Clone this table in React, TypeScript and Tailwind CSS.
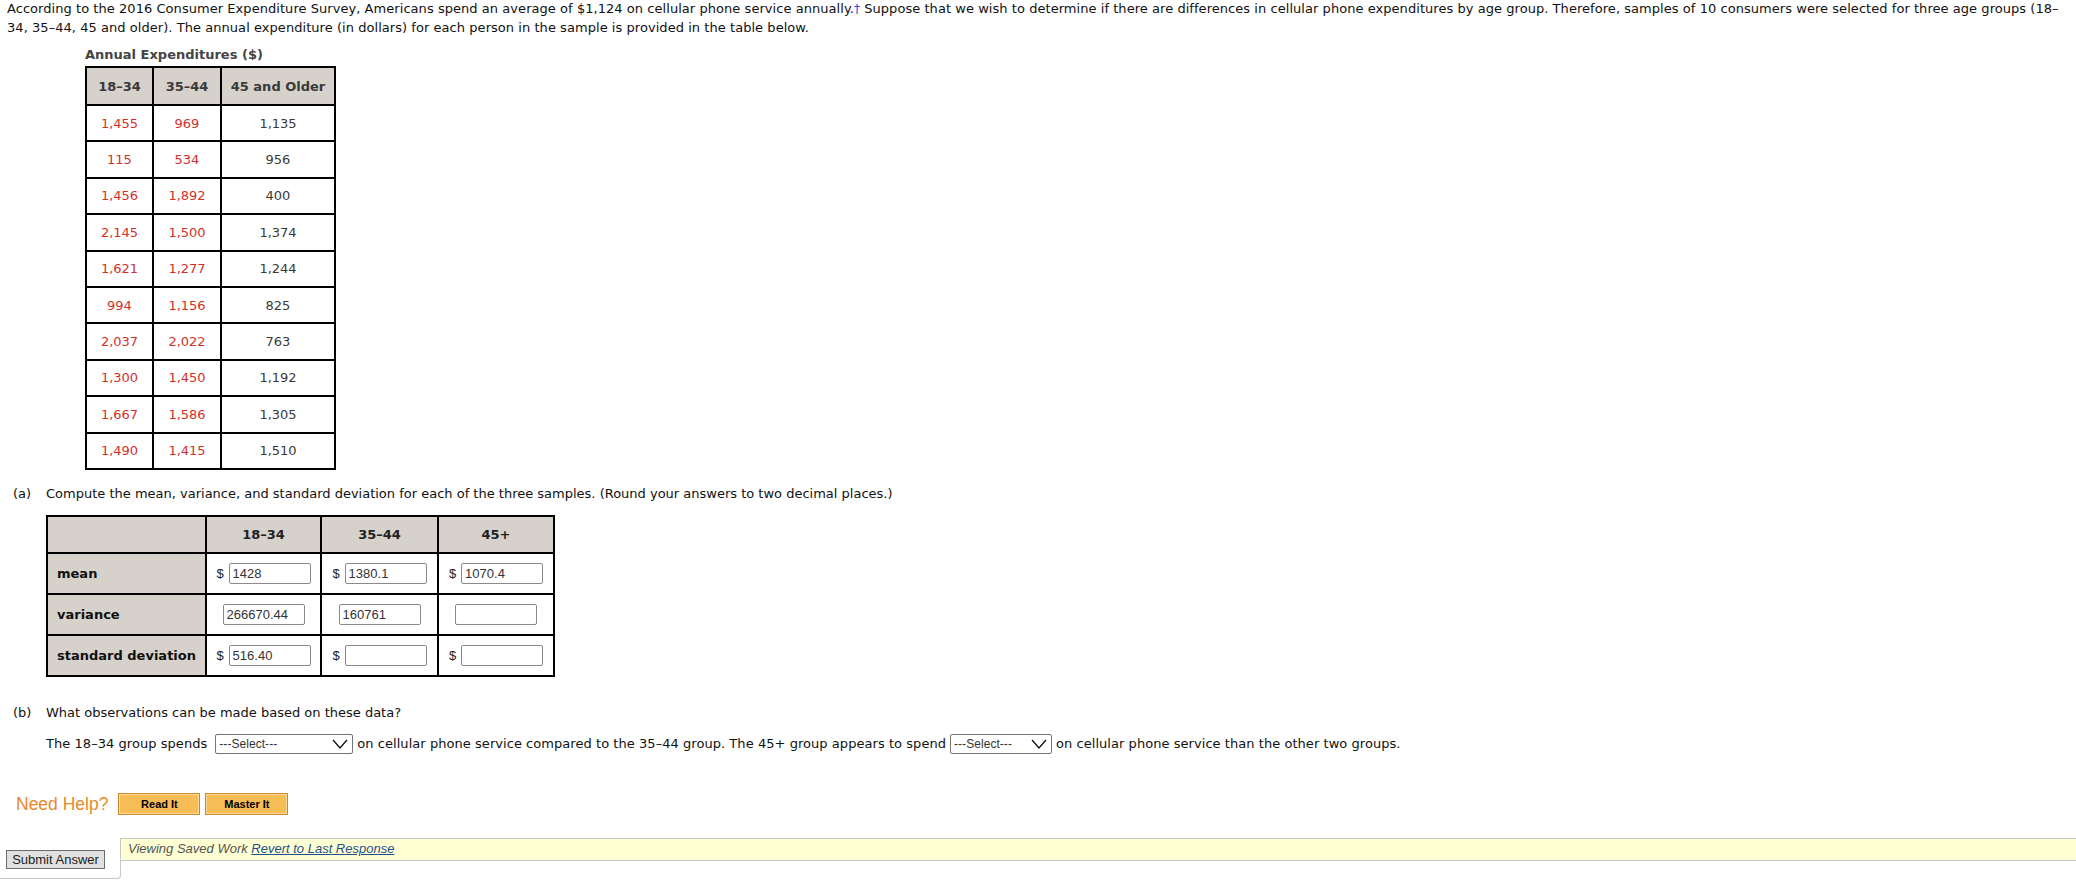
import React from 'react';

const DATA: string[][] = [
  ['1,455', '969', '1,135'],
  ['115', '534', '956'],
  ['1,456', '1,892', '400'],
  ['2,145', '1,500', '1,374'],
  ['1,621', '1,277', '1,244'],
  ['994', '1,156', '825'],
  ['2,037', '2,022', '763'],
  ['1,300', '1,450', '1,192'],
  ['1,667', '1,586', '1,305'],
  ['1,490', '1,415', '1,510'],
];

type Cell = { dollar: boolean; value: string };

const STATS: { label: string; cells: Cell[] }[] = [
  {
    label: 'mean',
    cells: [
      { dollar: true, value: '1428' },
      { dollar: true, value: '1380.1' },
      { dollar: true, value: '1070.4' },
    ],
  },
  {
    label: 'variance',
    cells: [
      { dollar: false, value: '266670.44' },
      { dollar: false, value: '160761' },
      { dollar: false, value: '' },
    ],
  },
  {
    label: 'standard deviation',
    cells: [
      { dollar: true, value: '516.40' },
      { dollar: true, value: '' },
      { dollar: true, value: '' },
    ],
  },
];

const AnswerBox: React.FC<{ value: string }> = ({ value }) => (
  <input
    readOnly
    value={value}
    className="w-[82px] h-[21px] px-[3px] border border-[#8a8a8a] rounded-[2px] bg-white text-[13px] text-[#333] font-['Liberation_Sans',Arial,sans-serif] outline-none"
  />
);

const FakeSelect: React.FC<{ width: string }> = ({ width }) => (
  <span
    className={`inline-flex items-center justify-between align-middle h-[20px] pl-[3px] pr-[4px] border border-[#767676] rounded-[2px] bg-white text-[12px] text-[#333] font-['Liberation_Sans',Arial,sans-serif] ${width}`}
  >
    <span>---Select---</span>
    <svg width="16" height="10" viewBox="0 0 16 10" className="shrink-0">
      <polyline points="1,1 8,9 15,1" fill="none" stroke="#111" strokeWidth="1.3" />
    </svg>
  </span>
);

const App: React.FC = () => {
  return (
    <div className="min-h-screen bg-white font-['DejaVu_Sans',Verdana,sans-serif] text-[13px] text-[#111]">
      {/* INTRO */}
      <p className="pl-[7px] pr-[16px] leading-[19px] tracking-[0.05px] -mt-[1px]">
        According to the 2016 Consumer Expenditure Survey, Americans spend an average of $1,124 on cellular phone
        service annually.<span className="text-[#2b4fd8] text-[12px] leading-none">†</span> Suppose that we wish to
        determine if there are differences in cellular phone expenditures by age group. Therefore, samples of 10
        consumers were selected for three age groups (18–34, 35–44, 45 and older). The annual expenditure (in dollars)
        for each person in the sample is provided in the table below.
      </p>

      {/* DATA TABLE */}
      <div className="ml-[85px] mt-[9px]">
        <div className="font-bold text-[#444] leading-[18px] mb-[2px]">Annual Expenditures ($)</div>
        <table className="border-separate border-spacing-0 border border-black">
          <thead>
            <tr className="bg-[#d6d2cb] text-[#3a3a3a]">
              <th className="w-[67px] border border-black py-[8.5px] leading-[19px] font-bold">18–34</th>
              <th className="w-[68px] border border-black py-[8.5px] leading-[19px] font-bold">35–44</th>
              <th className="w-[114px] border border-black py-[8.5px] leading-[19px] font-bold">45 and Older</th>
            </tr>
          </thead>
          <tbody>
            {DATA.map((row) => (
              <tr key={row.join('-')}>
                <td className="border border-black pt-[8.5px] pb-[7.5px] leading-[18.4px] text-center text-[#d3302b]">{row[0]}</td>
                <td className="border border-black pt-[8.5px] pb-[7.5px] leading-[18.4px] text-center text-[#d3302b]">{row[1]}</td>
                <td className="border border-black pt-[8.5px] pb-[7.5px] leading-[18.4px] text-center text-[#3a3a3a]">{row[2]}</td>
              </tr>
            ))}
          </tbody>
        </table>
      </div>

      {/* PART A */}
      <div className="flex mt-[14px] leading-[19px]">
        <span className="pl-[13px] w-[46px]">(a)</span>
        <span>Compute the mean, variance, and standard deviation for each of the three samples. (Round your answers to two decimal places.)</span>
      </div>

      <div className="ml-[46px] mt-[12px]">
        <table className="border-separate border-spacing-0 border border-black">
          <thead>
            <tr className="bg-[#d6d2cb] text-[#222]">
              <th className="w-[159px] border border-black py-[8px] leading-[19px]"></th>
              <th className="w-[115px] border border-black py-[8px] leading-[19px] font-bold">18–34</th>
              <th className="w-[117px] border border-black py-[8px] leading-[19px] font-bold">35–44</th>
              <th className="w-[116px] border border-black py-[8px] leading-[19px] font-bold">45+</th>
            </tr>
          </thead>
          <tbody>
            {STATS.map((row) => (
              <tr key={row.label}>
                <td className="bg-[#d6d2cb] border border-black h-[41px] pl-[9px] font-bold text-[#111] whitespace-nowrap">
                  {row.label}
                </td>
                {row.cells.map((c, i) => (
                  <td key={i} className="border border-black h-[41px] px-[4px]">
                    <div className="flex items-center justify-center gap-[5px]">
                      {c.dollar && <span className="font-['Liberation_Sans',Arial,sans-serif] text-[13px] text-[#222]">$</span>}
                      <AnswerBox value={c.value} />
                    </div>
                  </td>
                ))}
              </tr>
            ))}
          </tbody>
        </table>
      </div>

      {/* PART B */}
      <div className="flex mt-[26px] leading-[19px]">
        <span className="pl-[13px] w-[46px]">(b)</span>
        <span>What observations can be made based on these data?</span>
      </div>

      <div className="ml-[46px] mt-[12px] leading-[20px] flex items-center gap-[4px] tracking-[0.05px]">
        <span className="mr-[4px]">The 18–34 group spends</span>
        <FakeSelect width="w-[138px]" />
        <span>on cellular phone service compared to the 35–44 group. The 45+ group appears to spend</span>
        <FakeSelect width="w-[102px]" />
        <span>on cellular phone service than the other two groups.</span>
      </div>

      {/* HELP */}
      <div className="flex items-center mt-[37px] pl-[16px] font-['Liberation_Sans',Arial,sans-serif]">
        <span className="text-[17.5px] text-[#e5892b] mr-[10px]">Need Help?</span>
        <button className="w-[82px] h-[22px] bg-[#f6bc55] border border-[#c98530] shadow-[inset_0_0_0_1px_#fcdc95] text-[11px] font-bold text-black">
          Read It
        </button>
        <button className="w-[83px] h-[22px] ml-[5px] bg-[#f6bc55] border border-[#c98530] shadow-[inset_0_0_0_1px_#fcdc95] text-[11px] font-bold text-black">
          Master It
        </button>
      </div>

      {/* SUBMIT BAR */}
      <div className="flex mt-[21px] font-['Liberation_Sans',Arial,sans-serif]">
        <div className="w-[121px] h-[41px] shrink-0 border-r border-b border-[#c8c8c8] rounded-br-[4px] pl-[6px] pt-[12px]">
          <button className="w-[99px] h-[19px] bg-[#e1e1e1] border border-[#6b6b6b] text-[13px] leading-[15px] text-[#222]">
            Submit Answer
          </button>
        </div>
        <div className="flex-1 h-[23px] bg-[#ffffd4] border-t border-b border-[#c8c8c8] pl-[7px] italic text-[13px] leading-[20px] text-[#555]">
          Viewing Saved Work <span className="text-[#1f4f8f] underline">Revert to Last Response</span>
        </div>
      </div>
    </div>
  );
};

export default App;
